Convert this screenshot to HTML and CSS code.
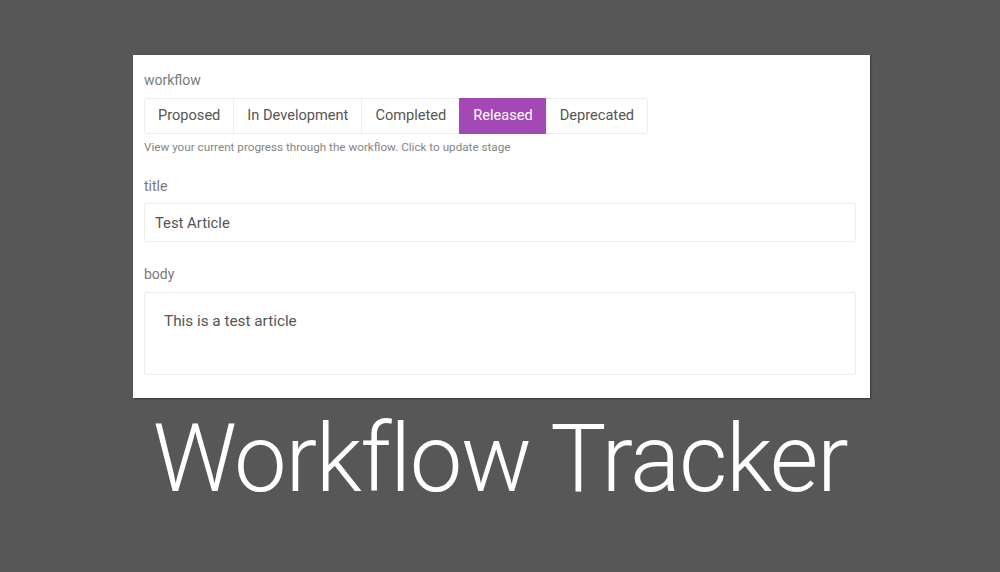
FILE: index.html
```html
<!DOCTYPE html>
<html>
<head>
<meta charset="utf-8">
<link rel="stylesheet" href="styles.css">
</head>
<body>
<main class="page">
  <section class="card">
    <div class="field">
      <div class="label">workflow</div>
      <div class="stages">
        <button class="stage">Proposed</button>
        <button class="stage">In Development</button>
        <button class="stage">Completed</button>
        <button class="stage active">Released</button>
        <button class="stage">Deprecated</button>
      </div>
      <div class="help">View your current progress through the workflow. Click to update stage</div>
    </div>
    <div class="field">
      <div class="label">title</div>
      <div class="input">Test Article</div>
    </div>
    <div class="field">
      <div class="label">body</div>
      <div class="textarea">This is a test article</div>
    </div>
  </section>
  <h1 class="headline">Workflow Tracker</h1>
</main>
</body>
</html>
```
FILE: styles.css
```css
html, body {
  margin: 0;
  padding: 0;
  background: #575757;
  width: 1000px;
  height: 572px;
  overflow: hidden;
}
.page {
  padding-top: 55px;
  font-family: Roboto, "Liberation Sans", sans-serif;
}
.card {
  margin-left: 133px;
  width: 737px;
  height: 343px;
  box-sizing: border-box;
  background: #fff;
  padding: 15px 14px 0 11px;
  box-shadow: 1px 1px 2px rgba(0,0,0,0.35);
}
.field {
  display: flex;
  flex-direction: column;
}
.label {
  font-size: 14px;
  line-height: 20px;
  color: #7a7a7a;
  height: 20px;
}
.stages {
  display: flex;
  margin-top: 8px;
  align-self: flex-start;
  border: 1px solid #ececec;
  border-radius: 3px;
  height: 36px;
  box-sizing: border-box;
}
.stage {
  font-family: Roboto, "Liberation Sans", sans-serif;
  font-size: 14.6px;
  color: #555;
  background: #fff;
  border: 0;
  border-left: 1px solid #ececec;
  padding: 0 13px 2px;
  height: 34px;
  margin: 0;
}
.stage:first-child {
  border-left: 0;
  border-radius: 3px 0 0 3px;
}
.stage:last-child { border-radius: 0 3px 3px 0; }
.stage.active {
  background: #a348b4;
  color: #fff;
  border-left-color: #a348b4;
  height: 36px;
  margin-top: -1px;
  margin-bottom: -1px;
}
.help {
  font-size: 11.7px;
  line-height: 14px;
  color: #858585;
  margin-top: 6px;
}
.field + .field { margin-top: 22px; }
.input {
  margin-top: 7px;
  height: 39px;
  box-sizing: border-box;
  border: 1px solid #ececec;
  border-radius: 2px;
  padding: 0 10px;
  display: flex;
  align-items: center;
  font-size: 14.8px;
  color: #555;
}
.textarea {
  margin-top: 8px;
  height: 83px;
  box-sizing: border-box;
  border: 1px solid #ececec;
  border-radius: 2px;
  padding: 19px 19px;
  font-size: 15.3px;
  line-height: 18px;
  color: #555;
}
.headline {
  margin: 6px 0 0;
  text-align: center;
  color: #fff;
  font-family: Roboto, "Liberation Sans", sans-serif;
  font-weight: 300;
  font-size: 94px;
  line-height: 110px;
  letter-spacing: -1.4px;
}
```
